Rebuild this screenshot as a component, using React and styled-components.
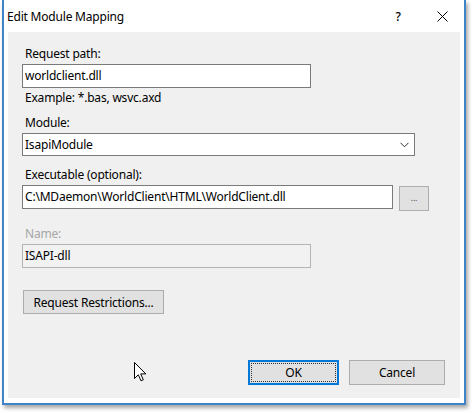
import React from 'react';
import styled, { createGlobalStyle } from 'styled-components';

const GlobalStyle = createGlobalStyle`
  html, body {
    margin: 0;
    background: #fff;
  }
  body {
    font-family: "Noto Sans", "Open Sans", sans-serif;
    font-size: 12px;
    letter-spacing: -0.2px;
    color: #000;
  }
`;

const ChevronDown = () =>
  <svg width="9" height="6" viewBox="0 0 9 6">
    <path d="M0.5 0.8 L4.5 4.8 L8.5 0.8" fill="none" stroke="#333" strokeWidth="1" />
  </svg>;

const CloseGlyph = () =>
  <svg width="11" height="11" viewBox="0 0 11 11">
    <path d="M0.5 0.5 L10.5 10.5 M10.5 0.5 L0.5 10.5" stroke="#000" strokeWidth="1" />
  </svg>;

const Pointer = () =>
  <svg width="13" height="20" viewBox="0 0 13 20">
    <path
      d="M0.5 0.5 L0.5 16.5 L4.3 12.8 L7 18.8 L9.3 17.8 L6.7 11.9 L11.8 11.9 Z"
      fill="#fff"
      stroke="#000"
      strokeWidth="1"
      strokeLinejoin="round"
    />
  </svg>;

const App = () =>
  <Page>
    <GlobalStyle />
    <Window>
      <TitleBar>
        <Title>Edit Module Mapping</Title>
        <CaptionButton>?</CaptionButton>
        <CaptionButton>
          <CloseGlyph />
        </CaptionButton>
      </TitleBar>
      <Body>
        <Group>
          <Label>Request path:</Label>
          <TextBox $width={289}>worldclient.dll</TextBox>
        </Group>
        <Hint>Example: *.bas, wsvc.axd</Hint>
        <Group $top={9}>
          <Label>Module:</Label>
          <Select>
            IsapiModule
            <ChevronDown />
          </Select>
        </Group>
        <Group $top={11}>
          <Label>Executable (optional):</Label>
          <Row>
            <TextBox $width={371}>C:\MDaemon\WorldClient\HTML\WorldClient.dll</TextBox>
            <BrowseButton>...</BrowseButton>
          </Row>
        </Group>
        <Group $top={15}>
          <Label $disabled>Name:</Label>
          <TextBox $width={289} $disabled>ISAPI-dll</TextBox>
        </Group>
        <RestrictionsButton>Request Restrictions...</RestrictionsButton>
        <Footer>
          <PushButton $width={91} $default>
            <FocusRing>OK</FocusRing>
          </PushButton>
          <PushButton $width={96}>Cancel</PushButton>
        </Footer>
      </Body>
    </Window>
    <Cursor>
      <Pointer />
    </Cursor>
  </Page>;

const Page = styled.div`
  position: relative;
  width: 474px;
  height: 413px;
  padding-left: 2px;
  box-sizing: border-box;
  overflow: hidden;
`;

const Window = styled.div`
  display: flex;
  flex-direction: column;
  width: 464px;
  height: 405px;
  box-sizing: border-box;
  background: #fff;
  border: 2px solid #3f84c6;
  border-top: none;
  box-shadow: 2px 3px 4px rgba(0, 0, 0, 0.35);
`;

const TitleBar = styled.div`
  display: flex;
  align-items: center;
  height: 32px;
  flex-shrink: 0;
  padding-left: 3px;
`;

const Title = styled.div`
  flex: 1;
  font-size: 12px;
`;

const CaptionButton = styled.div`
  display: flex;
  align-items: center;
  justify-content: center;
  width: 44px;
  height: 32px;
  font-size: 12px;
  font-weight: 500;
`;

const Body = styled.div`
  display: flex;
  flex: 1;
  flex-direction: column;
  margin: 0 4px 5px;
  padding: 14px 15px 13px 14px;
  background: #f0f0f0;
`;

const Group = styled.div`
  display: flex;
  flex-direction: column;
  margin-top: ${p => p.$top || 0}px;
`;

const Label = styled.div`
  line-height: 16px;
  margin-bottom: 2px;
  padding-left: 3px;
  color: ${p => (p.$disabled ? '#a6a6a6' : '#000')};
`;

const Hint = styled.div`
  margin-top: 2px;
  line-height: 16px;
  padding-left: 3px;
`;

const TextBox = styled.div`
  width: ${p => p.$width}px;
  height: 24px;
  box-sizing: border-box;
  padding: 0 2px;
  line-height: 22px;
  white-space: nowrap;
  overflow: hidden;
  background: ${p => (p.$disabled ? '#f2f2f2' : '#fff')};
  border: 1px solid ${p => (p.$disabled ? '#b4b4b4' : '#7a7a7a')};
`;

const Select = styled.div`
  display: flex;
  align-items: center;
  justify-content: space-between;
  width: 393px;
  height: 23px;
  box-sizing: border-box;
  padding: 0 5px 0 2px;
  line-height: 21px;
  background: #fff;
  border: 1px solid #7a7a7a;
`;

const Row = styled.div`
  display: flex;
  align-items: flex-start;
  gap: 6px;
`;

const ButtonBase = styled.div`
  display: flex;
  align-items: center;
  justify-content: center;
  box-sizing: border-box;
  background: #e1e1e1;
  border: 1px solid #adadad;
`;

const BrowseButton = styled(ButtonBase)`
  width: 30px;
  height: 25px;
  margin-top: 1px;
  font-size: 9px;
  color: #555;
  padding-bottom: 2px;
`;

const RestrictionsButton = styled(ButtonBase)`
  align-self: flex-start;
  width: 141px;
  height: 24px;
  margin-top: 22px;
  margin-left: 1px;
`;

const Footer = styled.div`
  display: flex;
  justify-content: flex-end;
  gap: 10px;
  margin-top: auto;
`;

const PushButton = styled(ButtonBase)`
  width: ${p => p.$width}px;
  height: 25px;
  border-color: ${p => (p.$default ? '#0078d7' : '#adadad')};
  box-shadow: ${p => (p.$default ? 'inset 0 0 0 1px #0078d7' : 'none')};
`;

const FocusRing = styled.div`
  display: flex;
  align-items: center;
  justify-content: center;
  width: calc(100% - 4px);
  height: calc(100% - 4px);
  box-sizing: border-box;
  border: 1px dotted #333;
`;

const Cursor = styled.div`
  position: absolute;
  left: 134px;
  top: 362px;
  line-height: 0;
`;

export default App;
